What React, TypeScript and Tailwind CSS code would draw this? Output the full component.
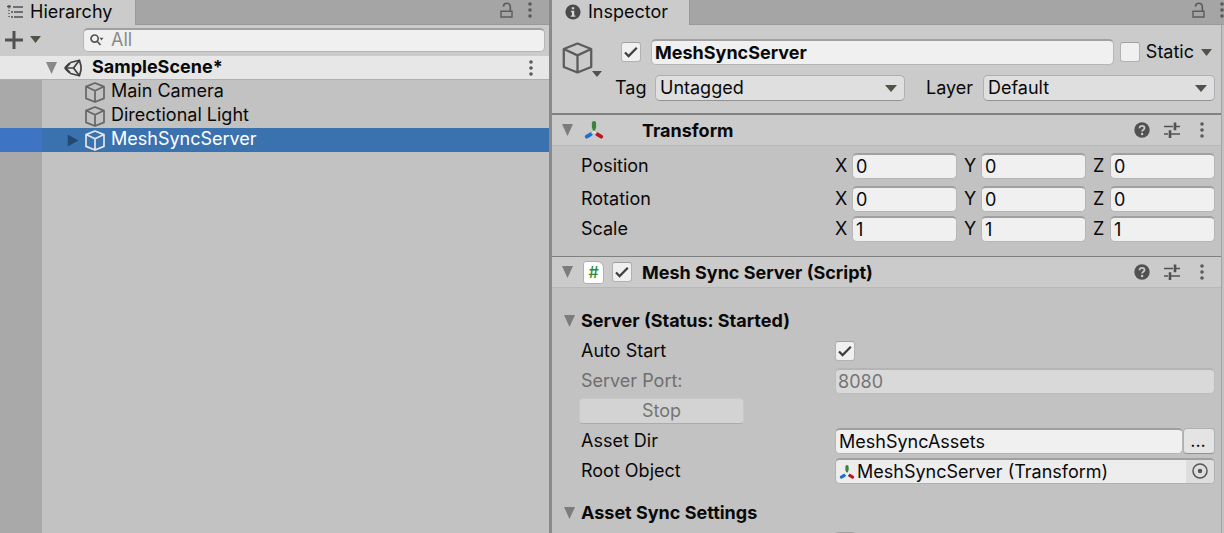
import React, { useState } from "react";

const fieldClass =
  "h-[26px] w-full min-w-0 rounded-[5px] border border-t-2 border-[#b6b6b6] border-t-[#a0a0a0] bg-[#f0f0f0] px-[3px] text-lg leading-[22px] text-[#090909] outline-none";

const sceneObjects = ["Main Camera", "Directional Light", "MeshSyncServer"];

const transformRows = [
  { name: "Position", value: "0" },
  { name: "Rotation", value: "0" },
  { name: "Scale", value: "1" },
];

const Cube = ({ className = "" }: { className?: string }) => (
  <svg viewBox="0 0 20 21" className={className} fill="none" stroke="currentColor" strokeLinejoin="round">
    <path d="M10 1 19 4.600V16.400L10 20 1 16.400V4.600ZM1 4.600 10 8.800l9-4.200M10 8.800V20" />
  </svg>
);

const Triangle = ({ className = "" }: { className?: string }) => (
  <svg viewBox="0 0 12 12" preserveAspectRatio="none" className={className} fill="currentColor">
    <path d="M0 0h12L6 12Z" />
  </svg>
);

const Dots = () => (
  <svg viewBox="0 0 4 16" className="h-4 w-1" fill="#5a5a5a">
    <circle cx="2" cy="2" r="1.800" />
    <circle cx="2" cy="8" r="1.800" />
    <circle cx="2" cy="14" r="1.800" />
  </svg>
);

const Lock = () => (
  <svg viewBox="0 0 13 16" className="h-4 w-[13px]" fill="none" stroke="#5c5c5c">
    <path d="M1 9.2h11v5.8H1Z" strokeWidth="1.400" />
    <path d="M3.400 4.6C3.600 2.4 4.800 1.300 6.6 1.3c2.200 0 3.700 1.400 3.700 3.600V9" strokeWidth="1.600" />
  </svg>
);

const Info = () => (
  <svg viewBox="0 0 16 16" className="size-4">
    <circle cx="8" cy="8" r="7.600" fill="#4a4a4a" />
    <path d="M6.800 3.200h2.400v2H6.800ZM6 6.800h3.200v4.600h1.200v1.400H5.800v-1.400h1.200V8.200H6Z" fill="#d8d8d8" />
  </svg>
);

const Help = () => (
  <svg viewBox="0 0 16 16" className="size-4">
    <circle cx="8" cy="8" r="7.700" fill="#515151" />
    <path d="M5.600 6.200C5.600 4.600 6.600 3.800 8 3.800s2.500.8 2.500 2.200c0 1.700-2.400 1.700-2.400 3.500" fill="none" stroke="#cbcbcb" strokeWidth="1.800" />
    <circle cx="8.100" cy="12" r="1.200" fill="#cbcbcb" />
  </svg>
);

const Sliders = () => (
  <svg viewBox="0 0 16 16" className="size-4" fill="none" stroke="#515151">
    <path d="M0 4.500h9M11 4.500h5M0 12h4M6.500 12H16" strokeWidth="1.700" />
    <path d="M11 .5v7.700M6 8.300V16" strokeWidth="2.600" />
  </svg>
);

const TransformIcon = ({ className = "" }: { className?: string }) => (
  <svg viewBox="0 0 20 18" className={className} strokeLinecap="round">
    <path d="M10 2.200v4" stroke="#38853b" strokeWidth="4.200" />
    <path d="M10 5.500v3" stroke="#38853b" strokeWidth="2.800" />
    <path d="m6.600 13.400-3.800 2.200" stroke="#1b6fd0" strokeWidth="3.900" />
    <path d="m13.400 13.400 3.800 2.200" stroke="#b51a1c" strokeWidth="3.900" />
    <path d="M10 10v1M10 11l-2 1.200M10 11l2 1.200" stroke="#e8e8e8" strokeWidth="1.200" />
  </svg>
);

const UnityLogo = () => (
  <svg viewBox="0 0 18 18" className="size-[18px]" fill="none" stroke="#404040" strokeLinejoin="round">
    <path d="M1.200 9 6.600 3.500 15.400 1.200 17 7v4l-1.600 5.800L6.600 14.500Z" strokeWidth="1.700" />
    <path d="M1.200 9h8.300L15.200 1.400M9.500 9l5.700 7.600" strokeWidth="1.700" />
    <path d="M1.200 9 5.500 4.500M1.200 9l4.300 4.500" strokeWidth="2.400" />
  </svg>
);

const Check = ({ label, checked = false }: { label: string; checked?: boolean }) => (
  <span className="relative inline-block size-5 shrink-0">
    <input
      type="checkbox"
      aria-label={label}
      defaultChecked={checked}
      className="peer block size-5 appearance-none rounded-[3px] border border-[#b2b2b2] border-t-[#a0a0a0] bg-[#f0f0f0]"
    />
    <svg viewBox="0 0 20 20" className="pointer-events-none absolute inset-0 hidden size-5 peer-checked:block" fill="none" stroke="#3f3f3f" strokeWidth="2.200">
      <path d="m4 10.500 3.600 3.600 8.200-8.400" />
    </svg>
  </span>
);

const Dropdown = ({ id, value }: { id: string; value: string }) => (
  <span className="relative block min-w-0">
    <select
      id={id}
      className="block h-[26px] w-full appearance-none rounded-[5px] border border-[#b0b0b0] border-b-[#939393] bg-[#dfdfdf] px-1 text-lg leading-6 text-[#090909] outline-none"
    >
      <option>{value}</option>
    </select>
    <Triangle className="pointer-events-none absolute top-[10px] right-2 h-[7px] w-3 text-[#50534a]" />
  </span>
);

const ComponentHeader = ({ title, open, onToggle, children }: { title: string; open: boolean; onToggle: () => void; children: React.ReactNode }) => (
  <div className="flex h-[31px] items-center border-b border-[#b8b8b8] bg-[#cbcbcb] pr-[11px] pl-[10px]">
    <button aria-label={`Toggle ${title}`} onClick={onToggle} className="w-[21px]">
      <Triangle className={open ? "h-3 w-[11px] text-[#7c7c7c]" : "h-3 w-[11px] -rotate-90 text-[#7c7c7c]"} />
    </button>
    <div className="flex w-[59px] items-center gap-2">{children}</div>
    <h2 className="flex-1 pt-0.5 text-lg leading-6 font-bold">{title}</h2>
    <div className="flex items-center gap-[14px]">
      <button aria-label="Help"><Help /></button>
      <button aria-label="Presets"><Sliders /></button>
      <button aria-label="More" className="flex w-4 justify-center"><Dots /></button>
    </div>
  </div>
);

const Foldout = ({ title }: { title: string }) => (
  <button className="flex h-[30px] items-center gap-[6px] pl-3 text-lg leading-6 font-bold">
    <Triangle className="h-3 w-[11px] text-[#7c7c7c]" />
    {title}
  </button>
);

const Hierarchy = () => {
  const [selected, setSelected] = useState("MeshSyncServer");

  return (
    <section className="flex min-w-0 flex-col overflow-hidden bg-[#c2c2c2]">
      <header className="flex h-[25px] shrink-0 bg-[#a5a5a5]">
        <h1 className="flex w-[135px] items-center gap-[7px] bg-[#cbcbcb] pb-0.5 pl-[7px] text-lg leading-6">
          <svg viewBox="0 0 16 14" className="h-[14px] w-4" fill="none" stroke="#515151" strokeWidth="1.400">
            <path d="M0 1.500h4M2 0v3.500M6 2h10M4 7h2M7 7h9M4 12h2M7 12h9" />
            <path d="M2 5v8" strokeDasharray="1 2" />
          </svg>
          Hierarchy
        </h1>
        <div className="flex flex-1 items-center justify-end gap-[15px] border-b border-l border-[#999999] pr-[17px] pb-1">
          <button aria-label="Lock"><Lock /></button>
          <button aria-label="More"><Dots /></button>
        </div>
      </header>
      <div className="flex h-[31px] shrink-0 items-center bg-[#cbcbcb] pr-1 pb-0.5 pl-[5px]">
        <button aria-label="Create" className="flex w-[78px] items-center gap-[7px]">
          <svg viewBox="0 0 18 18" className="size-[18px]" stroke="#515151" strokeWidth="3">
            <path d="M9 0v18M0 9h18" />
          </svg>
          <Triangle className="h-[7px] w-[11px] text-[#50534a]" />
        </button>
        <label className="flex h-6 flex-1 items-center gap-[7px] rounded-[5px] border border-t-2 border-[#b6b6b6] border-t-[#a0a0a0] bg-[#f0f0f0] pl-[6px]">
          <svg viewBox="0 0 14 12" className="h-3 w-[14px]" fill="none" stroke="#555555" strokeWidth="1.700">
            <circle cx="4.600" cy="4.600" r="3.600" />
            <path d="m7 7 3.500 4" />
            <path d="M9.500 3.800h4L11.500 6.500Z" fill="#555555" stroke="none" />
          </svg>
          <input aria-label="Search" placeholder="All" className="min-w-0 flex-1 text-lg leading-5 outline-none placeholder:text-[#8a8a8a]" />
        </label>
      </div>
      <div className="flex h-6 shrink-0 items-center border-b border-[#b0b0b0] bg-[#e7e7e7] pr-4 pl-[46px]">
        <Triangle className="mr-[7px] h-3 w-[11px] text-[#888888]" />
        <UnityLogo />
        <span className="ml-[10px] flex-1 pb-0.5 text-lg leading-6 font-bold">SampleScene*</span>
        <button aria-label="Scene menu"><Dots /></button>
      </div>
      <ul className="flex-1 bg-linear-to-r from-[#a9a9a9] from-[42px] to-[#c2c2c2] to-[42px]">
        {sceneObjects.map((name) => (
          <li key={name}>
            <button
              onClick={() => setSelected(name)}
              className={
                selected === name
                  ? "flex h-6 w-full items-center bg-linear-to-r from-[#3d75c4] from-[42px] to-[#3a72b0] to-[42px] pl-[67px] text-white"
                  : "flex h-6 w-full items-center pl-[67px]"
              }
            >
              <span className="flex w-[18px]">
                {name === "MeshSyncServer" && <Triangle className="h-[11px] w-3 -rotate-90 text-[#24486e]" />}
              </span>
              <Cube className={selected === name ? "h-[21px] w-5 text-[#e6e6e6] [stroke-width:1.7]" : "h-[21px] w-5 text-[#666666] [stroke-width:1.7]"} />
              <span className="ml-[6px] pb-0.5 text-lg leading-6">{name}</span>
            </button>
          </li>
        ))}
      </ul>
    </section>
  );
};

const Inspector = () => {
  const [transformOpen, setTransformOpen] = useState(true);
  const [scriptOpen, setScriptOpen] = useState(true);

  return (
    <section className="flex min-w-0 flex-col overflow-hidden bg-[#c2c2c2]">
      <header className="flex h-[25px] shrink-0 bg-[#a5a5a5]">
        <h1 className="flex w-[137px] items-center gap-[7px] bg-[#cbcbcb] pb-0.5 pl-[13px] text-lg leading-6">
          <Info />
          Inspector
        </h1>
        <div className="flex flex-1 items-center justify-end gap-[15px] overflow-hidden border-b border-l border-[#999999] pb-1">
          <button aria-label="Lock"><Lock /></button>
          <button aria-label="More"><Dots /></button>
        </div>
      </header>

      <div className="mr-[2px] flex-1 border-r border-[#a2a2a2]">
        <div className="flex h-[90px] border-b-2 border-[#7f837f] bg-[#cbcbcb] pt-[14px] pr-[6px] pl-[10px]">
          <button aria-label="Object icon" className="relative mr-[19px] h-[38px] w-10 shrink-0">
            <Cube className="h-[32px] w-[31px] text-[#5c5c5c] [stroke-width:1.5]" />
            <Triangle className="absolute right-0 bottom-0 h-[6px] w-[10px] text-[#50534a]" />
          </button>
          <div className="flex min-w-0 flex-1 flex-col gap-[10px]">
            <div className="flex items-center">
              <Check label="Active" checked />
              <input aria-label="Name" defaultValue="MeshSyncServer" className={`${fieldClass} ml-[10px] flex-1 font-bold`} />
              <label className="ml-[6px] flex items-center gap-[6px] text-lg leading-6">
                <Check label="Static" />
                Static
              </label>
              <button aria-label="Static options" className="mr-[3px] ml-[7px]"><Triangle className="h-[7px] w-[11px] text-[#50534a]" /></button>
            </div>
            <div className="-ml-[6px] grid grid-cols-[40px_250fr_78px_232fr] items-center text-lg leading-6">
              <label htmlFor="tag">Tag</label>
              <Dropdown id="tag" value="Untagged" />
              <label htmlFor="layer" className="pl-[21px]">Layer</label>
              <Dropdown id="layer" value="Default" />
            </div>
          </div>
        </div>

        <ComponentHeader title="Transform" open={transformOpen} onToggle={() => setTransformOpen(!transformOpen)}>
          <TransformIcon className="h-[18px] w-[22px]" />
        </ComponentHeader>
        {transformOpen && (
          <div className="pt-[5px] pr-[6px] pb-3 pl-[29px]">
            {transformRows.map(({ name, value }) => (
              <div key={name} className="flex h-[30px] items-center first:mb-[3px]">
                <span className="w-[254px] shrink-0 text-lg leading-6">{name}</span>
                <div className="grid flex-1 grid-cols-3 gap-[7px]">
                  {["X", "Y", "Z"].map((axis) => (
                    <label key={axis} className="flex items-center text-lg leading-6">
                      <span className="w-[17px] shrink-0">{axis}</span>
                      <input aria-label={`${name} ${axis}`} defaultValue={value} className={fieldClass} />
                    </label>
                  ))}
                </div>
              </div>
            ))}
          </div>
        )}

        <div className="border-t border-[#7f7f7f]">
          <ComponentHeader title="Mesh Sync Server (Script)" open={scriptOpen} onToggle={() => setScriptOpen(!scriptOpen)}>
            <span className="flex h-[23px] w-[21px] items-center justify-center rounded-[3px] rounded-tr-[7px] border border-[#b0b0b0] bg-white text-base leading-5 font-medium text-[#2e8b32]">#</span>
            <Check label="Enabled" checked />
          </ComponentHeader>
        </div>
        {scriptOpen && (
          <div className="pt-[18px]">
            <Foldout title="Server (Status: Started)" />
            <div className="mb-3 pr-[6px] pl-[29px] text-lg leading-6">
              <div className="flex h-[30px] items-center">
                <span className="w-[254px] shrink-0">Auto Start</span>
                <Check label="Auto Start" checked />
              </div>
              <div className="flex h-[30px] items-center">
                <label htmlFor="port" className="w-[254px] shrink-0 text-[#6f6f6f]">Server Port:</label>
                <input id="port" disabled defaultValue="8080" className="h-[26px] min-w-0 flex-1 rounded-[5px] border border-t-2 border-[#bdbdbd] border-t-[#b5b5b5] bg-[#d9d9d9] px-0.5 text-lg leading-[22px] text-[#757575]" />
              </div>
              <div className="-ml-[2px] flex h-[30px] items-center">
                <button disabled className="h-[26px] w-[165px] rounded-[4px] border border-[#c8c8c8] border-b-[#acacac] bg-[#d3d3d3] leading-6 text-[#757575]">Stop</button>
              </div>
              <div className="flex h-[30px] items-center">
                <label htmlFor="dir" className="w-[254px] shrink-0">Asset Dir</label>
                <input id="dir" defaultValue="MeshSyncAssets" className={`${fieldClass} flex-1`} />
                <button className="h-[26px] w-8 shrink-0 rounded-[4px] border border-[#b0b0b0] border-b-[#939393] bg-[#e4e4e4] pr-0.5 leading-6">...</button>
              </div>
              <div className="flex h-[30px] items-center">
                <span className="w-[254px] shrink-0">Root Object</span>
                <div className="flex h-[26px] flex-1 items-center overflow-hidden rounded-[5px] border border-t-2 border-[#b0b0b0] border-t-[#a0a0a0] bg-[#ededed] pl-[3px]">
                  <TransformIcon className="h-[14px] w-4 shrink-0" />
                  <input aria-label="Root Object" readOnly defaultValue="MeshSyncServer (Transform)" className="ml-[2px] min-w-0 flex-1 text-lg leading-[22px] outline-none" />
                  <button aria-label="Pick object" className="flex h-full w-7 items-center justify-center bg-[#dedede] pb-0.5">
                    <svg viewBox="0 0 16 16" className="size-4" fill="none" stroke="#555555" strokeWidth="1.500">
                      <circle cx="8" cy="8" r="7" />
                      <circle cx="8" cy="8" r="2.200" fill="#555555" stroke="none" />
                    </svg>
                  </button>
                </div>
              </div>
            </div>
            <Foldout title="Asset Sync Settings" />
            <div className="pt-1 pl-[283px]">
              <Check label="Sync Visibility" checked />
            </div>
          </div>
        )}
      </div>
    </section>
  );
};

const App = () => {
  return (
    <main className="grid h-screen grid-cols-[549fr_3px_672fr] overflow-hidden bg-[#8a8a8a] font-['Inter',sans-serif] text-[#090909]">
      <Hierarchy />
      <div />
      <Inspector />
    </main>
  );
};

export default App;
